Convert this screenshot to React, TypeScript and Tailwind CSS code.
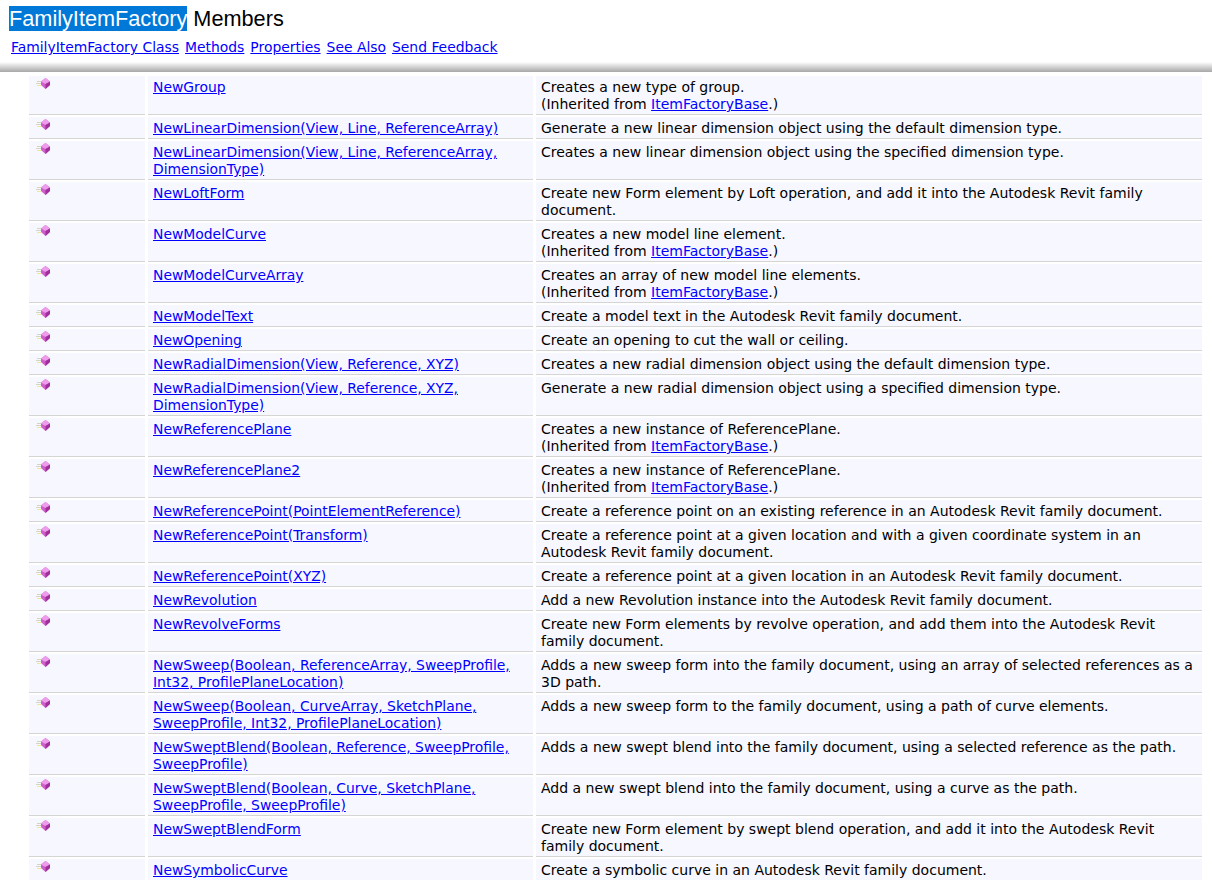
const F = "NewReferencePlane";

type Row = { name: string; desc: string; inherited?: boolean };

const rows: Row[] = [
  { name: "NewGroup", desc: "Creates a new type of group.", inherited: true },
  { name: "NewLinearDimension(View, Line, ReferenceArray)", desc: "Generate a new linear dimension object using the default dimension type." },
  { name: "NewLinearDimension(View, Line, ReferenceArray, DimensionType)", desc: "Creates a new linear dimension object using the specified dimension type." },
  { name: "NewLoftForm", desc: "Create new Form element by Loft operation, and add it into the Autodesk Revit family document." },
  { name: "NewModelCurve", desc: "Creates a new model line element.", inherited: true },
  { name: "NewModelCurveArray", desc: "Creates an array of new model line elements.", inherited: true },
  { name: "NewModelText", desc: "Create a model text in the Autodesk Revit family document." },
  { name: "NewOpening", desc: "Create an opening to cut the wall or ceiling." },
  { name: "NewRadialDimension(View, Reference, XYZ)", desc: "Creates a new radial dimension object using the default dimension type." },
  { name: "NewRadialDimension(View, Reference, XYZ, DimensionType)", desc: "Generate a new radial dimension object using a specified dimension type." },
  { name: F, desc: "Creates a new instance of ReferencePlane.", inherited: true },
  { name: F + "2", desc: "Creates a new instance of ReferencePlane.", inherited: true },
  { name: "NewReferencePoint(PointElementReference)", desc: "Create a reference point on an existing reference in an Autodesk Revit family document." },
  { name: "NewReferencePoint(Transform)", desc: "Create a reference point at a given location and with a given coordinate system in an Autodesk Revit family document." },
  { name: "NewReferencePoint(XYZ)", desc: "Create a reference point at a given location in an Autodesk Revit family document." },
  { name: "NewRevolution", desc: "Add a new Revolution instance into the Autodesk Revit family document." },
  { name: "NewRevolveForms", desc: "Create new Form elements by revolve operation, and add them into the Autodesk Revit family document." },
  { name: "NewSweep(Boolean, ReferenceArray, SweepProfile, Int32, ProfilePlaneLocation)", desc: "Adds a new sweep form into the family document, using an array of selected references as a 3D path." },
  { name: "NewSweep(Boolean, CurveArray, SketchPlane, SweepProfile, Int32, ProfilePlaneLocation)", desc: "Adds a new sweep form to the family document, using a path of curve elements." },
  { name: "NewSweptBlend(Boolean, Reference, SweepProfile, SweepProfile)", desc: "Adds a new swept blend into the family document, using a selected reference as the path." },
  { name: "NewSweptBlend(Boolean, Curve, SketchPlane, SweepProfile, SweepProfile)", desc: "Add a new swept blend into the family document, using a curve as the path." },
  { name: "NewSweptBlendForm", desc: "Create new Form element by swept blend operation, and add it into the Autodesk Revit family document." },
  { name: "NewSymbolicCurve", desc: "Create a symbolic curve in an Autodesk Revit family document." },
];

function MethodIcon() {
  return (
    <svg width="15" height="11" viewBox="0 0 15 11" className="block">
      <path d="M2 3h4v1H2zM1 5h5v1H1z" fill="#d4d4c4" />
      <path d="M2 7h4v1H2z" fill="#ece6a0" />
      <path d="M10.5 0L15 3.5V7l-4.5 4L6 7V3.5z" fill="#cf5fcb" />
      <path d="M10.5 0L15 3.5 10.5 6 6 3.5z" fill="#ee9cec" />
      <path d="M10.5 6L15 3.5V7l-4.5 4z" fill="#a02f9c" />
    </svg>
  );
}

function A({ children }: { children: React.ReactNode }) {
  return <a href="#" className="text-[#0000ff] underline">{children}</a>;
}

export default function App() {
  return (
    <div className="h-[880px] overflow-hidden bg-white font-['DejaVu_Sans','Verdana',sans-serif] text-[13.9px] leading-[17px] text-black">
      <div className="h-[62px] px-[9px] pt-[6px]">
        <h1 className="font-['Liberation_Sans',Arial,sans-serif] text-[21.7px] leading-[25px] font-normal">
          <span className="bg-[#0078d7] text-white">FamilyItemFactory</span> Members
        </h1>
        <div className="mt-[8px] flex gap-[6px] pl-[2px]">
          <A>FamilyItemFactory Class</A>
          <A>Methods</A>
          <A>Properties</A>
          <A>See Also</A>
          <A>Send Feedback</A>
        </div>
      </div>
      <div className="h-[10px] bg-gradient-to-b from-white to-[#a8a8a8]" />
      <div className="ml-[29px] mr-[10px] mt-[4px] grid gap-y-[2px]">
        {rows.map((r) => (
          <div key={r.name} className="grid grid-cols-[116px_385px_666px] gap-x-[3px]">
            <div className="border-b border-b-[#d5d5d3] bg-[#f7f7ff] pl-[6px] pt-[2px]">
              <MethodIcon />
            </div>
            <div className="border-b border-b-[#d5d5d3] bg-[#f7f7ff] pl-[5px] pr-[2px] pt-[3px] pb-[1px]">
              <A>{r.name}</A>
            </div>
            <div className="border-b border-b-[#d5d5d3] bg-[#f7f7ff] pl-[5px] pr-[2px] pt-[3px] pb-[1px] text-[14px]">
              {r.desc}
              {r.inherited && (
                <>
                  <br />
                  (Inherited from <A>ItemFactoryBase</A>.)
                </>
              )}
            </div>
          </div>
        ))}
      </div>
    </div>
  );
}
